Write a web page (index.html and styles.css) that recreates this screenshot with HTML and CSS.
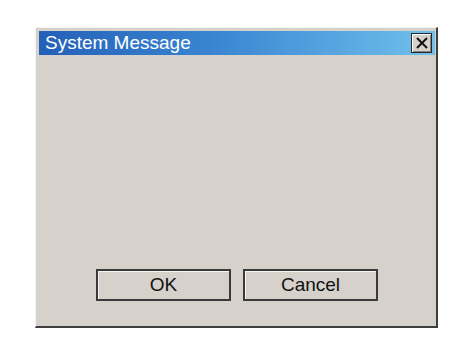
FILE: index.html
```html
<!DOCTYPE html>
<html>
<head>
<meta charset="utf-8">
<link rel="stylesheet" href="styles.css">
</head>
<body>
<div class="window">
  <div class="titlebar">
    <span class="title">System Message</span>
    <button class="close" aria-label="Close">
      <svg width="14" height="14" viewBox="0 0 14 14"><path d="M2 2 L12 12 M12 2 L2 12" stroke="#111" stroke-width="2" fill="none"/></svg>
    </button>
  </div>
  <div class="content">
    <button class="btn">OK</button>
    <button class="btn">Cancel</button>
  </div>
</div>
</body>
</html>
```
FILE: styles.css
```css
html, body {
  margin: 0;
  padding: 0;
  background: #ffffff;
}
body {
  padding: 27px 0 0 35px;
  font-family: "Liberation Sans", Arial, sans-serif;
}
.window {
  box-sizing: border-box;
  width: 403px;
  height: 301px;
  background: #d6d2cb;
  border-left: 1px solid #f4f3f0;
  border-top: 1px solid #f4f3f0;
  border-right: 2px solid #3e3e3e;
  border-bottom: 2px solid #3e3e3e;
  padding: 3px 1px 0 3px;
  display: flex;
  flex-direction: column;
}
.titlebar {
  height: 24px;
  background: linear-gradient(to right, #2460b8 0%, #3a86d2 45%, #70c0ec 100%);
  display: flex;
  align-items: center;
  justify-content: space-between;
  padding: 0 3px 0 6px;
}
.title {
  color: #ffffff;
  font-size: 19px;
  line-height: 24px;
}
.close {
  box-sizing: border-box;
  width: 21px;
  height: 20px;
  padding: 0;
  margin: 0;
  background: #d6d2cb;
  border: 1px solid #2a2a2a;
  box-shadow: inset 1px 1px 0 #ffffff, inset -1px -1px 0 #808080;
  display: flex;
  align-items: center;
  justify-content: center;
}
.content {
  flex: 1;
  display: flex;
  align-items: flex-end;
  justify-content: center;
  gap: 12px;
  padding: 0 0 25px 0;
}
.btn {
  box-sizing: border-box;
  width: 135px;
  height: 32px;
  margin: 0;
  padding: 0;
  background: #d6d2cb;
  border: 2px solid #3a3a3a;
  box-shadow: inset 1px 1px 0 #f6f5f2;
  font-family: "Liberation Sans", Arial, sans-serif;
  font-size: 19px;
  color: #111111;
}
```
